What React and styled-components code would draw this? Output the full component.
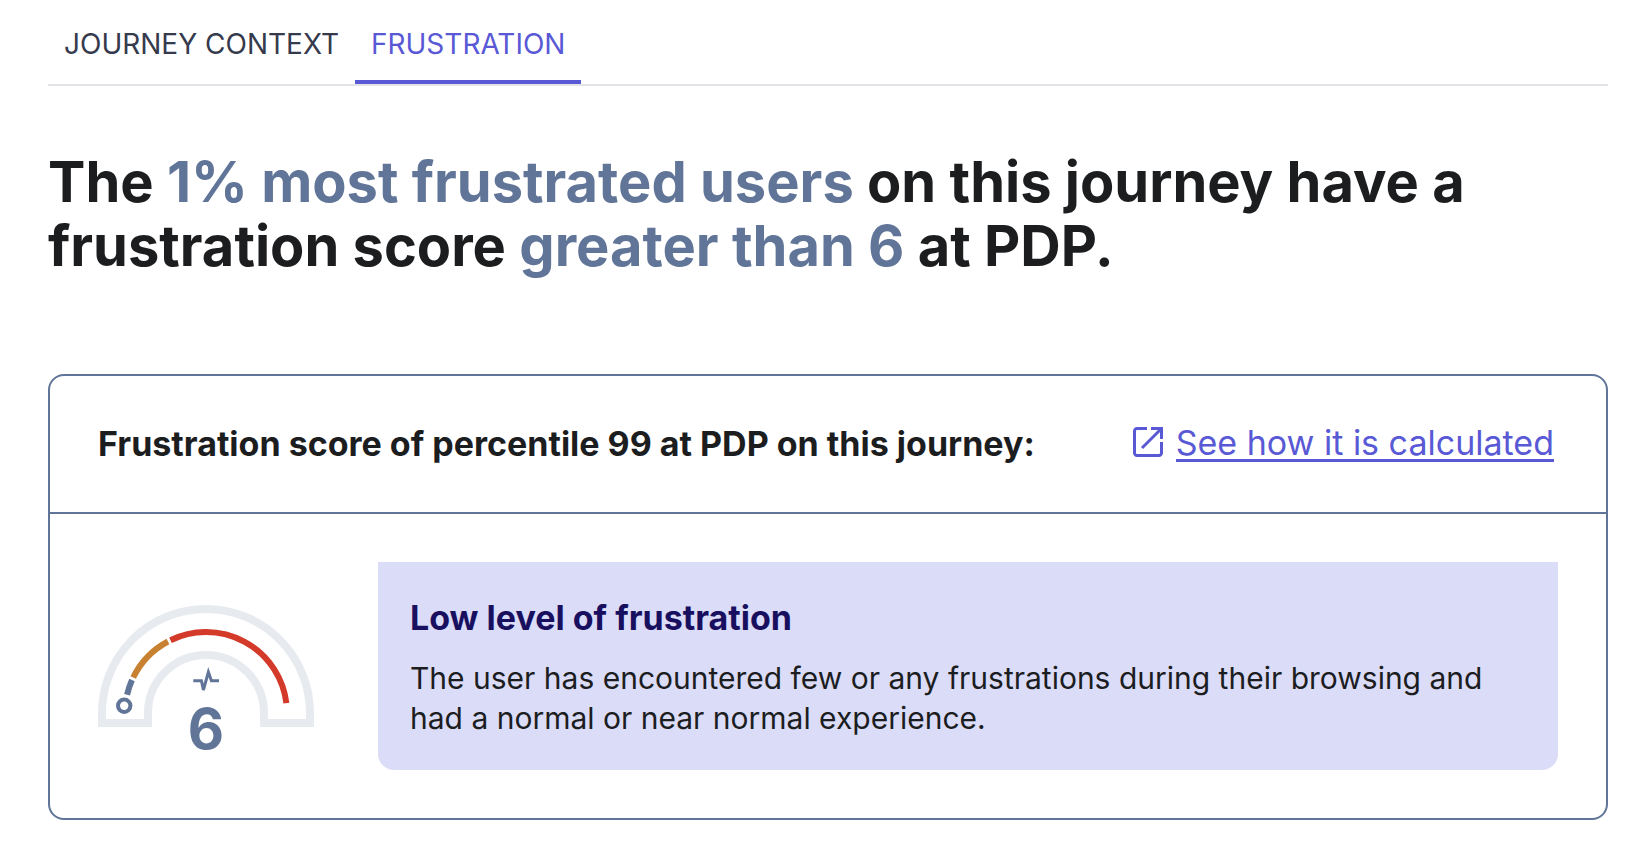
import React, { useState } from "react";
import styled, { createGlobalStyle } from "styled-components";

const GAUGE_RADIUS = 81;
const GAUGE_CENTER = { x: 108, y: 108 };

const levels = [
  { name: "low", from: 167, to: 156, color: "#617598" },
  { name: "medium", from: 154, to: 118, color: "#c88131" },
  { name: "high", from: 116, to: 7, color: "#d33a2a" },
];

const pointAt = (angle) => {
  const rad = (angle * Math.PI) / 180;
  const x = GAUGE_CENTER.x + GAUGE_RADIUS * Math.cos(rad);
  const y = GAUGE_CENTER.y - GAUGE_RADIUS * Math.sin(rad);
  return `${x.toFixed(2)} ${y.toFixed(2)}`;
};

const arc = (from, to) =>
  `M${pointAt(from)} A${GAUGE_RADIUS} ${GAUGE_RADIUS} 0 0 1 ${pointAt(to)}`;

const OpenIcon = () => (
  <svg width="30" height="30" viewBox="0 0 30 30" fill="none" aria-hidden="true">
    <path
      d="M14 1.5H4A2.5 2.5 0 0 0 1.5 4V26A2.5 2.5 0 0 0 4 28.5H26A2.5 2.5 0 0 0 28.5 26V15"
      stroke="currentColor"
      strokeWidth="3"
    />
    <path d="M18 1.5H28.5V12M28 2L9 21" stroke="currentColor" strokeWidth="3" />
  </svg>
);

const Gauge = ({ score }) => (
  <GaugeBox>
    <svg width="216" height="122" viewBox="0 0 216 122" fill="none" aria-hidden="true">
      <path
        d="M4 118V108A104 104 0 0 1 212 108V118H166V108A58 58 0 0 0 50 108V118Z"
        stroke="#e7eaef"
        strokeWidth="8"
      />
      {levels.map((level) => (
        <path
          key={level.name}
          d={arc(level.from, level.to)}
          stroke={level.color}
          strokeWidth="6"
        />
      ))}
      <circle cx="26.2" cy="100.7" r="6.2" stroke="#617598" strokeWidth="4" />
      <path
        d="M95.3 75.7H103.4L105.4 85L110.4 67L113.4 75.7H121"
        stroke="#617598"
        strokeWidth="3"
      />
    </svg>
    <Score>{score}</Score>
  </GaugeBox>
);

const App = () => {
  const [tab, setTab] = useState("Frustration");

  return (
    <Page>
      <GlobalStyle />
      <Tabs role="tablist">
        {["Journey context", "Frustration"].map((name) => (
          <Tab
            key={name}
            type="button"
            role="tab"
            aria-selected={tab === name}
            $active={tab === name}
            onClick={() => setTab(name)}
          >
            {name}
          </Tab>
        ))}
      </Tabs>
      <Headline>
        The <Accent>1% most frustrated users</Accent> on this journey have a
        frustration score <Accent>greater than 6</Accent> at PDP.
      </Headline>
      <Card>
        <CardHeader>
          <CardTitle>
            Frustration score of percentile 99 at PDP on this journey:
          </CardTitle>
          <HelpLink href="#calculation">
            <OpenIcon />
            <span>See how it is calculated</span>
          </HelpLink>
        </CardHeader>
        <CardBody>
          <Gauge score={6} />
          <Info>
            <InfoTitle>Low level of frustration</InfoTitle>
            <InfoText>
              The user has encountered few or any frustrations during their
              browsing and had a normal or near normal experience.
            </InfoText>
          </Info>
        </CardBody>
      </Card>
    </Page>
  );
};

export default App;

const GlobalStyle = createGlobalStyle`
  * {
    box-sizing: border-box;
  }
  body {
    margin: 0;
    background: #ffffff;
    color: #1c1d1f;
    font-family: Inter, "Liberation Sans", sans-serif;
  }
`;

const Page = styled.main`
  padding: 0 34px 30px 48px;
`;

const Tabs = styled.div`
  display: flex;
  border-bottom: 2px solid #e3e4e8;
`;

const Tab = styled.button`
  height: 84px;
  padding: 8px 16px 0;
  border: 0;
  border-bottom: 4px solid ${({ $active }) => ($active ? "#5959d6" : "transparent")};
  background: none;
  color: ${({ $active }) => ($active ? "#5959d6" : "#363a4d")};
  font-family: inherit;
  font-size: 28px;
  line-height: 40px;
  text-transform: uppercase;
  cursor: pointer;
`;

const Headline = styled.h1`
  margin: 64px 0 96px;
  font-size: 56px;
  font-weight: 700;
  line-height: 64px;
`;

const Accent = styled.span`
  color: #617598;
`;

const Card = styled.section`
  border: 2px solid #617598;
  border-radius: 16px;
`;

const CardHeader = styled.header`
  display: flex;
  align-items: center;
  justify-content: space-between;
  padding: 44px 52px 44px 48px;
  border-bottom: 2px solid #617598;
`;

const CardTitle = styled.h2`
  margin: 0;
  font-size: 34px;
  font-weight: 700;
  line-height: 48px;
`;

const HelpLink = styled.a`
  display: flex;
  align-items: flex-start;
  gap: 13px;
  color: #5959d6;
  font-size: 34px;
  line-height: 32px;
  text-decoration: none;
  & span {
    border-bottom: 3px solid #5959d6;
  }
`;

const CardBody = styled.div`
  display: flex;
  align-items: center;
  gap: 64px;
  padding: 48px;
`;

const GaugeBox = styled.div`
  position: relative;
  flex: none;
  & svg {
    display: block;
  }
`;

const Score = styled.strong`
  position: absolute;
  top: 92px;
  left: 0;
  width: 100%;
  color: #617598;
  font-size: 56px;
  font-weight: 700;
  line-height: 64px;
  text-align: center;
`;

const Info = styled.div`
  flex: 1;
  padding: 32px;
  border-radius: 0 0 16px 16px;
  background: #dbdcf8;
`;

const InfoTitle = styled.h3`
  margin: 0 0 16px;
  color: #190f5f;
  font-size: 34px;
  font-weight: 700;
  line-height: 48px;
`;

const InfoText = styled.p`
  margin: 0;
  font-size: 30px;
  line-height: 40px;
`;
